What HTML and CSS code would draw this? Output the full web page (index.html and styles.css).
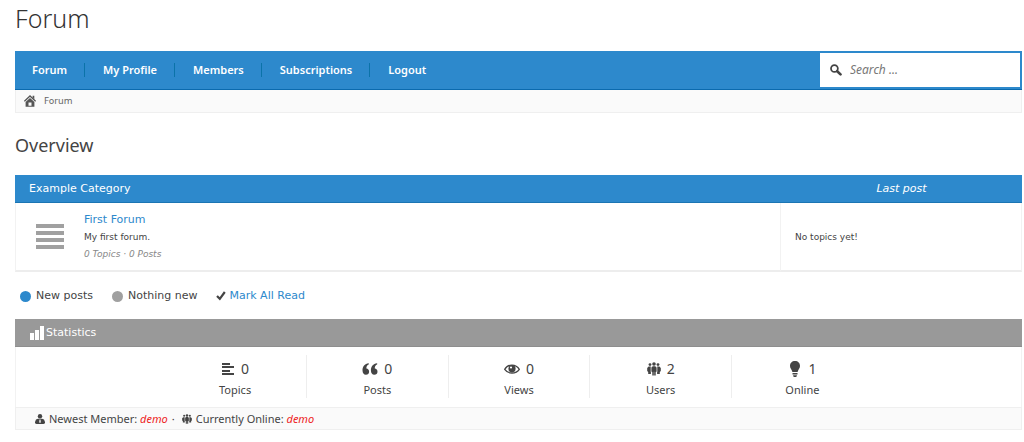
FILE: index.html
```html
<!DOCTYPE html>
<html lang="en">
<head>
<meta charset="utf-8">
<meta name="viewport" content="width=device-width, initial-scale=1">
<title>Forum</title>
<link rel="stylesheet" href="styles.css">
</head>
<body>
<svg class="sprite" aria-hidden="true">
  <symbol id="i-users" viewBox="0 0 14 14">
    <circle cx="3" cy="2.6" r="1.4"/><circle cx="7" cy="2" r="1.8"/><circle cx="11" cy="2.6" r="1.4"/>
    <path d="M4.4 5.4 5.8 4.2h2.4l1.4 1.2v4.2l-.9.6V13.500H7.2V9.8h-.4V13.500H5.3v-3.3l-.9-.6z"/>
    <path d="M3.900 4.500H1.6L.2 5.900v3.200l1 .8V12h2.700v-1.800l-.2-.4V5.2zM10.100 4.500h2.300l1.400 1.400v3.200l-1 .8V12h-2.700v-1.800l.2-.4V5.200z"/>
  </symbol>
</svg>
<main class="page">
  <h1 class="title">Forum</h1>

  <div class="bar">
    <nav class="menu" aria-label="Forum menu">
      <a href="#forum">Forum</a>
      <a href="#profile">My Profile</a>
      <a href="#members">Members</a>
      <a href="#subscriptions">Subscriptions</a>
      <a href="#logout">Logout</a>
    </nav>
    <form class="search" role="search">
      <label for="q" aria-label="Search">
        <svg class="icon-search" viewBox="0 0 13 13"><circle cx="4.800" cy="4.800" r="3.700" fill="none" stroke="currentColor" stroke-width="1.900"/><path d="M7.800 7.800l3.600 3.500" stroke="currentColor" stroke-width="2.800" stroke-linecap="round"/></svg>
      </label>
      <input id="q" type="text" placeholder="Search ...">
    </form>
  </div>
  <nav class="crumbs" aria-label="Breadcrumb">
    <svg class="icon-home" viewBox="0 0 12 12"><path d="M.4 6.300 6 1l5.600 5.300" fill="none" stroke="currentColor" stroke-width="1.300"/><path d="M8.600.8h1.700v3.500L8.600 2.700z"/><path fill-rule="evenodd" d="M1.600 7 6 2.900 10.400 7v4.800H1.600zM4.500 7.500v3.200h3V7.500z"/></svg>
    <a href="#forum">Forum</a>
  </nav>

  <h2 class="subtitle">Overview</h2>

  <table class="category">
    <thead>
      <tr><th scope="col">Example Category</th><th scope="col" class="last">Last post</th></tr>
    </thead>
    <tbody>
      <tr>
        <td>
          <div class="forum">
            <svg class="icon-forum" viewBox="0 0 28 25"><path d="M0 0h28v4H0zM0 7h28v4H0zM0 14h28v4H0zM0 21h28v4H0z"/></svg>
            <div>
              <a class="name" href="#first-forum">First Forum</a>
              <p class="desc">My first forum.</p>
              <p class="counts">0 Topics · 0 Posts</p>
            </div>
          </div>
        </td>
        <td class="last">No topics yet!</td>
      </tr>
    </tbody>
  </table>

  <div class="legend">
    <span class="key"><i class="dot new"></i>New posts</span>
    <span class="key"><i class="dot"></i>Nothing new</span>
    <span class="key read"><svg class="icon-check" viewBox="0 0 10 10"><path d="M1 5l2.800 2.800L8.800 1" fill="none" stroke="currentColor" stroke-width="2.200"/></svg><a href="#read">Mark All Read</a></span>
  </div>

  <section class="stats">
    <h3 class="stats-head"><svg class="icon-chart" viewBox="0 0 15 14"><path d="M0 7h4v7H0zM5 4h4v10H5zM10 0h4v14h-4z"/></svg>Statistics</h3>
    <div class="numbers">
      <div class="stat"><div class="value"><svg class="icon-stat" viewBox="0 0 14 14"><path d="M1 1h8v2H1zM1 4h12v2H1zM1 8h8v2H1zM1 11h12v2H1z"/></svg>0</div>Topics</div>
      <div class="stat"><div class="value"><svg class="icon-stat wide" viewBox="0 0 16 14"><path d="M6.700 1.200C2.700 1.600.5 4.600.5 8.300c0 2.900 1.300 4.500 3.400 4.500 1.900 0 3.200-1.300 3.200-3.100S5.900 6.700 4.400 6.600c-.2-2 .7-3.500 2.500-4.300z"/><path d="M15.100 1.200c-4 .4-6.200 3.400-6.200 7.100 0 2.900 1.300 4.500 3.400 4.500 1.900 0 3.200-1.300 3.200-3.100s-1.200-3-2.700-3.100c-.2-2 .7-3.500 2.500-4.300z"/></svg>0</div>Posts</div>
      <div class="stat"><div class="value"><svg class="icon-stat wide" viewBox="0 0 16 14"><path d="M.7 7.300C4 1.600 12 1.600 15.300 7.300 12 12.200 4 12.200.7 7.300z" fill="none" stroke="currentColor" stroke-width="1.300"/><circle cx="8" cy="6.700" r="3.600"/><circle cx="7" cy="5.500" r="1.100" fill="#fff"/></svg>0</div>Views</div>
      <div class="stat"><div class="value"><svg class="icon-stat"><use href="#i-users"/></svg>2</div>Users</div>
      <div class="stat"><div class="value"><svg class="icon-stat bulb" viewBox="0 0 12 16"><path d="M6 0C3 0 1 2.100 1 4.900c0 2.400 2 3.700 2.400 6.100h5.200C9 8.600 11 7.300 11 4.900 11 2.100 9 0 6 0zM3.500 12h5v1.600h-5zM4 14.200h4L7.300 16H4.700z"/></svg>1</div>Online</div>
    </div>
    <div class="stats-foot">
      <svg class="icon-small" viewBox="0 0 10 10"><circle cx="5" cy="2.200" r="2.200"/><path fill-rule="evenodd" d="M3 4.700h4l2 .7 1 2.600v1.300L8.500 10h-7L0 9.300V8l1-2.600zM4.500 5.500l-.3 2.700.8.800.8-.8-.3-2.700z"/></svg>
      <span>Newest Member: <a href="#demo">demo</a></span>
      <span>·</span>
      <svg class="icon-small online"><use href="#i-users"/></svg>
      <span>Currently Online: <a href="#demo">demo</a></span>
    </div>
  </section>
</main>
</body>
</html>
```
FILE: styles.css
```css
* { box-sizing: border-box; }

body {
  margin: 0;
  background: #fff;
  color: #444;
  font: 11px/16px "DejaVu Sans", Verdana, sans-serif;
}

a { color: #2d89cc; text-decoration: none; }
p { margin: 0; }
svg { flex: none; fill: currentColor; }
.sprite { display: none; }

.page { padding: 0 2px 12px 15px; }

.title {
  margin: 0 0 15px;
  color: #333;
  font: 300 25px/36px "Noto Sans", "Open Sans", sans-serif;
}

.bar {
  display: flex;
  justify-content: space-between;
  height: 39px;
  padding: 2px;
  background: #2d89cc;
  border-bottom: 1px solid #0b6aae;
}

.menu { display: flex; align-items: center; }
.menu a {
  padding: 0 17px;
  color: #fff;
  font: 600 11px/14px "Noto Sans", sans-serif;
  border-left: 1px solid #0b73a9;
}
.menu a + a { padding-left: 18px; }
.menu a:first-child { padding-left: 15px; border-left: 0; }

.search {
  display: flex;
  align-items: center;
  gap: 8px;
  width: 200px;
  padding-left: 10px;
  background: #fff;
}
.search label { display: flex; }
.search input {
  flex: 1;
  min-width: 0;
  padding: 0;
  border: 0;
  outline: 0;
  background: none;
  color: #444;
  font: italic 12px/16px "Noto Sans", sans-serif;
}
.search input::placeholder { color: #777; opacity: 1; }
.icon-search { width: 12px; height: 12px; }

.crumbs {
  display: flex;
  align-items: center;
  gap: 8px;
  height: 23px;
  padding-left: 8px;
  background: #fafafa;
  border: 1px solid #efefef;
  border-top: 0;
  color: #555;
  font-size: 9px;
}
.crumbs a { color: #666; }
.icon-home { width: 12px; height: 12px; }

.subtitle {
  margin: 20px 0 18px;
  font: 400 18px/24px "Noto Sans", sans-serif;
}

.category { width: 100%; border-collapse: separate; border-spacing: 0; }
.category th {
  height: 28px;
  padding: 0 14px;
  background: #2d89cc;
  border-bottom: 1px solid #1b75b3;
  color: #fff;
  font: 500 11px/16px "DejaVu Sans", Verdana, sans-serif;
  text-align: left;
}
.category th.last { text-align: center; font-style: italic; }
.category td {
  height: 69px;
  padding: 0 20px;
  border: 1px solid #f2f2f2;
  border-width: 0 1px 2px;
  border-bottom-color: #ededed;
}
.category .last { width: 241px; }
.category td.last { padding: 0 14px; border-left: 0; font-size: 9px; }
.forum { display: flex; align-items: center; gap: 20px; }
.icon-forum { width: 28px; height: 25px; color: #a0a0a0; }
.name { display: block; line-height: 18px; }
.desc, .counts { font-size: 9px; line-height: 17px; }
.counts { color: #888; font-style: italic; }

.legend { display: flex; align-items: center; gap: 19px; margin: 16px 5px 15px; }
.key { display: flex; align-items: center; gap: 5px; }
.read { gap: 3px; }
.dot { width: 11px; height: 11px; border-radius: 50%; background: #a0a0a0; }
.dot.new { background: #2d89cc; }
.icon-check { width: 10px; height: 10px; }

.stats-head {
  display: flex;
  align-items: center;
  gap: 1px;
  height: 28px;
  margin: 0;
  padding-left: 15px;
  background: #999;
  border-bottom: 1px solid #8e8e8e;
  color: #fff;
  font: 500 11px/16px "DejaVu Sans", Verdana, sans-serif;
}
.icon-chart { width: 15px; height: 14px; }

.numbers {
  display: flex;
  justify-content: center;
  padding: 8px 0 9px;
  border: 1px solid #f2f2f2;
  border-width: 0 1px;
  font: 11px/16px "Noto Sans", sans-serif;
}
.stat { width: 14.1%; height: 43px; text-align: center; }
.stat + .stat { border-left: 1px solid #eee; }
.value {
  display: flex;
  align-items: center;
  justify-content: center;
  gap: 6px;
  height: 27px;
  font-size: 14px;
}
.icon-stat { width: 14px; height: 14px; }
.icon-stat.wide { width: 16px; }
.icon-stat.bulb { height: 16px; }

.stats-foot {
  display: flex;
  align-items: center;
  gap: 4px;
  height: 23px;
  padding-left: 19px;
  background: #fafafa;
  border: 1px solid #efefef;
  font: 11px/16px "Noto Sans", sans-serif;
}
.stats-foot a { color: #e22; font-style: italic; }
.icon-small { width: 10px; height: 10px; }
.online { margin-left: 3px; }
```
